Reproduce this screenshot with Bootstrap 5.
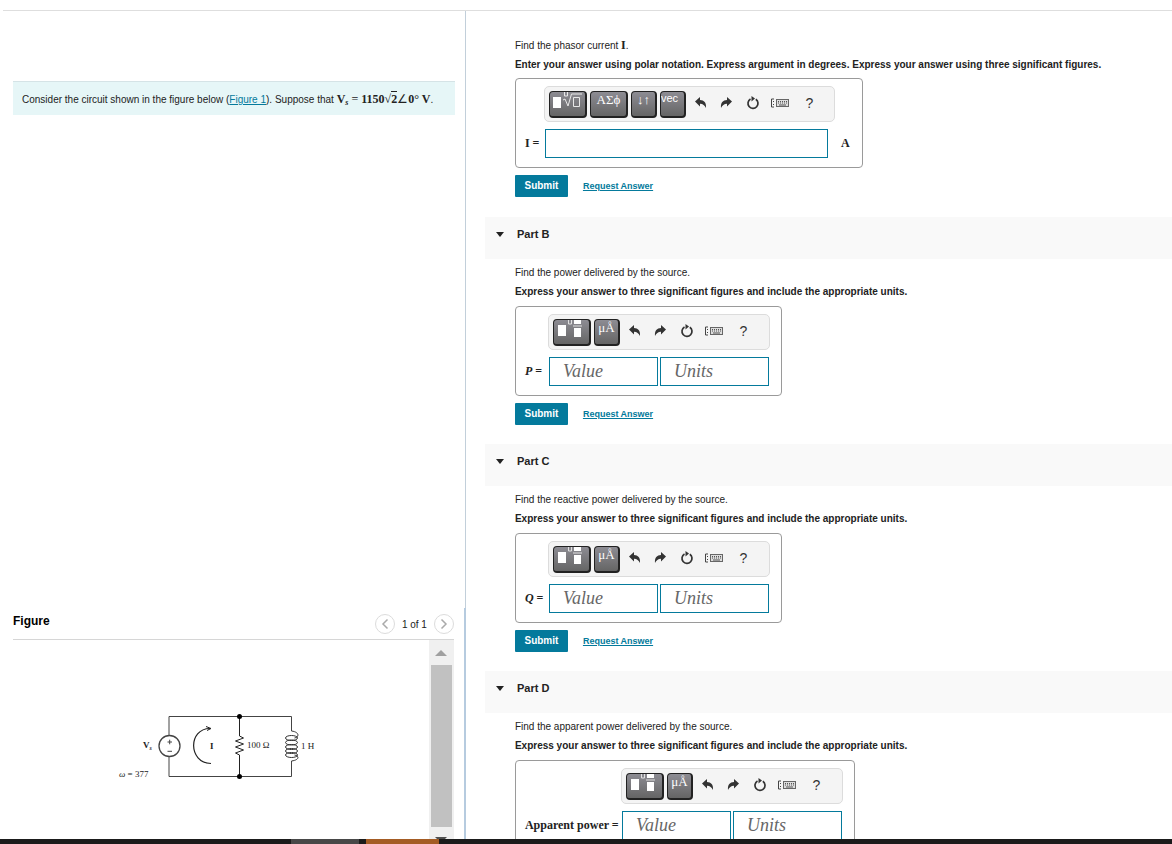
<!DOCTYPE html>
<html lang="en">
<head>
<meta charset="utf-8">
<meta name="viewport" content="width=device-width, initial-scale=1">
<title>Circuit problem</title>
<link href="https://cdn.jsdelivr.net/npm/bootstrap@5.3.0/dist/css/bootstrap.min.css" rel="stylesheet">
<script src="https://cdn.jsdelivr.net/npm/bootstrap@5.3.0/dist/js/bootstrap.bundle.min.js" defer></script>
<style>
  body { font: 10px/14px "Liberation Sans", sans-serif; color: #222; background: #fff; }
  .page-main { margin: 10px 0 0 3px; border-top: 1px solid #dedede; min-height: 0; }
  .pane-left { flex: 0 0 39.6%; min-width: 0; }
  .pane-top { border-right: 1px solid #c2cfda; padding: 70px 10px 0; }
  .intro { background: #e6f6f7; border-top: 1px solid #d5e3e6; height: 34px; padding: 1px 9px 0; line-height: 34px; white-space: nowrap; }
  a { color: #047a9c; }
  .tex { font-family: "Liberation Serif", serif; font-weight: bold; font-size: 12px; line-height: 12px; }
  .tex sub { font-size: 8px; font-style: italic; }
  .tex .rad { border-top: 1px solid #222; }
  .tex .thin { font-weight: normal; }
  .pane-figure { border-right: 2px solid #b6cbdf; height: 231px; padding: 0 10px; }
  .fig-head { height: 33px; border-bottom: 1px solid #d6d6d6; }
  .fig-head h2 { font-size: 12px; font-weight: bold; margin: 0 0 4px; color: #000; }
  .pager { width: 20px; height: 20px; border: 1px solid #dcdcdc; border-radius: 50%; background: #fff; padding: 0; }
  .pager svg { display: block; margin: auto; }
  .page-count { margin: 2px 7px 0; }
  .track { width: 25px; background: #f0f0f0; }
  .thumb { width: 21px; background: #c1c1c1; height: 162px; }
  .tri { border: 6px solid transparent; width: 0; height: 0; }
  .tri-up { border-top: 0; border-bottom-color: #a0a0a0; margin: 10px 0 9px; }
  .tri-down { border-bottom: 0; border-top-color: #505050; margin-top: 10px; }
  .pane-right { min-width: 0; padding-left: 19px; }
  .part-body { padding: 7px 0 19px 30px; height: 185px; }
  .part-first { padding-top: 28px; height: 206px; }
  .part-body p { margin: 0 0 5px; white-space: nowrap; }
  .part-body p.ask { font-weight: bold; margin-bottom: 7px; }
  .part-first p.ask { margin-bottom: 6px; }
  .part-head { background: #f9f9f9; height: 42px; padding: 0 0 7px 11px; }
  .part-head h2 { font-size: 11px; font-weight: bold; margin: 0; padding-left: 13px; }
  .caret { border: 4px solid transparent; border-top: 5px solid #222; border-bottom: 0; }
  .answer { display: inline-grid; grid-template-columns: auto auto auto; align-items: center; row-gap: 7px; border: 1px solid #9a9a9a; border-radius: 4px; height: 90px; padding: 7px 11px 9px 9px; vertical-align: top; }
  .answer label { font: bold 12px/16px "Liberation Serif", serif; white-space: nowrap; grid-row: 2; padding-bottom: 1px; }
  .lbl-a { width: 19px; }
  .lbl-b { width: 23px; }
  .lbl-d { width: 96px; }
  .unit { width: 16px; padding-left: 6px; }
  .tools { grid-column: 2; border: 1px solid #dcdcdc; border-radius: 5px; background: #f4f4f4; height: 36px; width: 222px; padding-left: 4px; }
  .tools-a { width: 291px; }
  .key { height: 27px; border: 1px solid #222; border-right-width: 2px; border-bottom-width: 2px; border-radius: 4px; background: linear-gradient(#8d8c93, #656565); color: #fff; padding: 0; margin-right: 3px; overflow: hidden; font: 13px/16px "Liberation Serif", serif; display: flex; align-items: flex-start; justify-content: center; }
  .key svg { flex: none; }
  .key-w { width: 38px; }
  .key-n { width: 26px; }
  .key-sans { font: 11px/13px "Liberation Sans", sans-serif; justify-content: flex-start; }
  .act { width: 27px; height: 30px; border: 0; padding: 0 0 2px; background: none; color: #333; font-size: 14px; line-height: 20px; }
  .act svg { display: block; margin: auto; }
  .act-first { width: 24px; }
  .act-help { margin-left: 2px; }
  .field { border: 1px solid #047a9c; border-radius: 0; background: #fff; height: 29px; width: 109px; padding: 0 13px; font: italic 18px "Liberation Serif", serif; }
  .field::placeholder { color: #666; opacity: 1; }
  .fields { grid-column: 2; grid-row: 2; gap: 2px; padding-left: 1px; }
  .field-a { width: 283px; }
  .btn-submit { background: #047a9c; color: #fff; border: 0; border-radius: 1px; font-size: 10px; font-weight: bold; line-height: 22px; height: 22px; width: 53px; padding: 0; }
  .actions { margin-top: 7px; gap: 15px; }
  .actions a { font-size: 9px; font-weight: bold; }
  .taskbar { height: 5px; background: #1b1b1b; }
  .task-gray { width: 68px; margin-left: 291px; background: #484848; }
  .task-orange { width: 73px; margin-left: 7px; background: #a45c24; }
</style>
</head>
<body class="d-flex flex-column vh-100 overflow-hidden">
<svg class="d-none" aria-hidden="true">
  <symbol id="undo" viewBox="0 0 12 12"><path d="M0 4.500 5 0v3c4 .2 6.500 2.500 6 8C9.700 8.300 8 7 5 6.800V9.500z" fill="#333"/></symbol>
  <symbol id="redo" viewBox="0 0 12 12"><path d="M12 4.500 7 0v3C3 3.200.5 5.500 1 11 2.300 8.300 4 7 7 6.800V9.500z" fill="#333"/></symbol>
  <symbol id="reset" viewBox="0 0 14 14"><path d="M9.800 3.200A5 5 0 1 1 4.500 3" fill="none" stroke="#333" stroke-width="1.700"/><path d="M5.500 0 9 2.600 5.500 5.500z" fill="#333"/></symbol>
  <symbol id="keys" viewBox="0 0 20 10"><path d="M4 1H1.500v8H4M3.500 3v1M3.500 6v1" fill="none" stroke="#444"/><rect x="6.500" y="1.500" width="12" height="7" fill="#ddd" stroke="#666"/><path d="M8 3.500h9M8 5h9" stroke="#555" stroke-dasharray="1 1"/><path d="M9 7h7" stroke="#555"/></symbol>
  <symbol id="root" viewBox="0 0 34 22"><path d="M3 5h8v11H3z" fill="#fff"/><path d="M14.500 0v4h3V0M13 8l2-1 3 7 3.500-12H32M23.500 5.500h6v9h-6z" fill="none" stroke="#e8e8e8"/></symbol>
  <symbol id="frac" viewBox="0 0 34 22"><path d="M4 5h8v11H4zM20 0h7v4h-7zM20 8h7v9h-7z" fill="#fff"/><path d="M14.500 0v4h3V0M19 6h9" fill="none" stroke="#e0e0e0"/></symbol>
</svg>

<main class="page-main d-flex flex-grow-1">
  <section class="pane-left d-flex flex-column">
    <div class="pane-top flex-grow-1">
      <div class="intro">Consider the circuit shown in the figure below (<a href="#figure">Figure 1</a>). Suppose that <span class="tex">V<sub>s</sub> <span class="thin">=</span> 1150<span class="thin">√</span><span class="rad">2</span><span class="thin">∠</span>0<span class="thin">°</span> V</span>.</div>
    </div>
    <div class="pane-figure d-flex flex-column" id="figure">
      <div class="fig-head d-flex align-items-center">
        <h2 class="me-auto">Figure</h2>
        <button class="pager" aria-label="Previous"><svg width="8" height="12"><path d="M6.500 1.500 2 6l4.500 4.500" fill="none" stroke="#aaa" stroke-width="1.500"/></svg></button>
        <span class="page-count">1 of 1</span>
        <button class="pager" aria-label="Next"><svg width="8" height="12"><path d="M1.500 1.500 6 6l-4.500 4.500" fill="none" stroke="#aaa" stroke-width="1.500"/></svg></button>
      </div>
      <div class="d-flex flex-grow-1 overflow-hidden">
        <div class="flex-grow-1 ps-5 pt-5">
          <svg class="ms-5" width="240" height="110" viewBox="109 688 240 110" role="img" aria-label="Circuit diagram">
            <g fill="none" stroke="#444">
              <path d="M169 735.500V716.500H291.500V731M169 756.500V776.500H291.500V761"/>
              <circle cx="169.500" cy="746" r="10.500" stroke-width="1.300"/>
              <path d="M167.500 742h4.500M169.700 739.700v4.600M167.500 751.300h4.500"/>
              <path d="M210 728.500c-22 0-22 34.500 1 35" stroke="#222" stroke-width="1.200"/>
              <path d="M206 726.500l5 2-4 2" stroke="#222"/>
              <path d="M239.500 716v20l4 2-8 3 8 3-8 3 8 3-8 3 4 2v22" stroke="#222"/>
              <path d="M291.500 731c8 1 8 6 3 7M291.500 761c8-1 8-5 3-6" stroke="#333"/>
              <g stroke="#333"><ellipse cx="291.500" cy="738" rx="6" ry="2.500"/><ellipse cx="291.500" cy="742.500" rx="6" ry="2.500"/><ellipse cx="291.500" cy="747" rx="6" ry="2.500"/><ellipse cx="291.500" cy="751" rx="6" ry="2.500"/><ellipse cx="291.500" cy="755" rx="6" ry="2.500"/></g>
            </g>
            <circle cx="239.500" cy="716.500" r="2.500"/><circle cx="239.500" cy="776.500" r="2.500"/>
            <g font-family="Liberation Serif, serif" font-size="9" fill="#222">
              <text x="143" y="748" font-weight="bold">V<tspan font-size="6" dy="2" font-style="italic">s</tspan></text>
              <text x="210" y="749" font-weight="bold">I</text>
              <text x="247" y="748">100 Ω</text><text x="301" y="749">1 H</text>
              <text x="119" y="777"><tspan font-style="italic">ω</tspan> = 377</text>
            </g>
          </svg>
        </div>
        <div class="track d-flex flex-column align-items-center">
          <div class="tri tri-up"></div><div class="thumb flex-shrink-0"></div><div class="tri tri-down"></div>
        </div>
      </div>
    </div>
  </section>

  <section class="pane-right flex-grow-1 overflow-hidden">
    <div class="part-body part-first">
      <p>Find the phasor current <b class="tex">I</b>.</p>
      <p class="ask">Enter your answer using polar notation. Express argument in degrees. Express your answer using three significant figures.</p>
      <div class="answer">
        <div class="tools tools-a d-flex align-items-center">
          <button class="key key-w" aria-label="Templates"><svg width="34" height="22"><use href="#root"/></svg></button>
          <button class="key key-w">ΑΣϕ</button>
          <button class="key key-n">↓↑</button>
          <button class="key key-n key-sans">vec</button>
          <button class="act act-first" aria-label="Undo"><svg width="12" height="12"><use href="#undo"/></svg></button>
          <button class="act" aria-label="Redo"><svg width="12" height="12"><use href="#redo"/></svg></button>
          <button class="act" aria-label="Reset"><svg width="14" height="14"><use href="#reset"/></svg></button>
          <button class="act" aria-label="Keyboard shortcuts"><svg width="20" height="10"><use href="#keys"/></svg></button>
          <button class="act act-help" aria-label="Help">?</button>
        </div>
        <label class="lbl-a" for="ans-a">I =</label>
        <div class="fields d-flex"><input class="field field-a" id="ans-a"></div>
        <label class="unit" for="ans-a">A</label>
      </div>
      <div class="actions d-flex align-items-center"><button class="btn btn-submit">Submit</button><a href="#">Request Answer</a></div>
    </div>

    <div class="part-head d-flex align-items-center"><span class="caret"></span><h2>Part B</h2></div>
    <div class="part-body">
      <p>Find the power delivered by the source.</p>
      <p class="ask">Express your answer to three significant figures and include the appropriate units.</p>
      <div class="answer">
        <div class="tools d-flex align-items-center">
          <button class="key key-w" aria-label="Templates"><svg width="34" height="22"><use href="#frac"/></svg></button>
          <button class="key key-n">μÅ</button>
          <button class="act act-first" aria-label="Undo"><svg width="12" height="12"><use href="#undo"/></svg></button>
          <button class="act" aria-label="Redo"><svg width="12" height="12"><use href="#redo"/></svg></button>
          <button class="act" aria-label="Reset"><svg width="14" height="14"><use href="#reset"/></svg></button>
          <button class="act" aria-label="Keyboard shortcuts"><svg width="20" height="10"><use href="#keys"/></svg></button>
          <button class="act act-help" aria-label="Help">?</button>
        </div>
        <label class="lbl-b" for="ans-b"><i>P</i> =</label>
        <div class="fields d-flex"><input class="field" id="ans-b" placeholder="Value"><input class="field" aria-label="Units" placeholder="Units"></div>
      </div>
      <div class="actions d-flex align-items-center"><button class="btn btn-submit">Submit</button><a href="#">Request Answer</a></div>
    </div>

    <div class="part-head d-flex align-items-center"><span class="caret"></span><h2>Part C</h2></div>
    <div class="part-body">
      <p>Find the reactive power delivered by the source.</p>
      <p class="ask">Express your answer to three significant figures and include the appropriate units.</p>
      <div class="answer">
        <div class="tools d-flex align-items-center">
          <button class="key key-w" aria-label="Templates"><svg width="34" height="22"><use href="#frac"/></svg></button>
          <button class="key key-n">μÅ</button>
          <button class="act act-first" aria-label="Undo"><svg width="12" height="12"><use href="#undo"/></svg></button>
          <button class="act" aria-label="Redo"><svg width="12" height="12"><use href="#redo"/></svg></button>
          <button class="act" aria-label="Reset"><svg width="14" height="14"><use href="#reset"/></svg></button>
          <button class="act" aria-label="Keyboard shortcuts"><svg width="20" height="10"><use href="#keys"/></svg></button>
          <button class="act act-help" aria-label="Help">?</button>
        </div>
        <label class="lbl-b" for="ans-c"><i>Q</i> =</label>
        <div class="fields d-flex"><input class="field" id="ans-c" placeholder="Value"><input class="field" aria-label="Units" placeholder="Units"></div>
      </div>
      <div class="actions d-flex align-items-center"><button class="btn btn-submit">Submit</button><a href="#">Request Answer</a></div>
    </div>

    <div class="part-head d-flex align-items-center"><span class="caret"></span><h2>Part D</h2></div>
    <div class="part-body">
      <p>Find the apparent power delivered by the source.</p>
      <p class="ask">Express your answer to three significant figures and include the appropriate units.</p>
      <div class="answer">
        <div class="tools d-flex align-items-center">
          <button class="key key-w" aria-label="Templates"><svg width="34" height="22"><use href="#frac"/></svg></button>
          <button class="key key-n">μÅ</button>
          <button class="act act-first" aria-label="Undo"><svg width="12" height="12"><use href="#undo"/></svg></button>
          <button class="act" aria-label="Redo"><svg width="12" height="12"><use href="#redo"/></svg></button>
          <button class="act" aria-label="Reset"><svg width="14" height="14"><use href="#reset"/></svg></button>
          <button class="act" aria-label="Keyboard shortcuts"><svg width="20" height="10"><use href="#keys"/></svg></button>
          <button class="act act-help" aria-label="Help">?</button>
        </div>
        <label class="lbl-d" for="ans-d">Apparent power =</label>
        <div class="fields d-flex"><input class="field" id="ans-d" placeholder="Value"><input class="field" aria-label="Units" placeholder="Units"></div>
      </div>
    </div>
  </section>
</main>
<footer class="taskbar d-flex flex-shrink-0"><div class="task-gray"></div><div class="task-orange"></div></footer>
</body>
</html>
